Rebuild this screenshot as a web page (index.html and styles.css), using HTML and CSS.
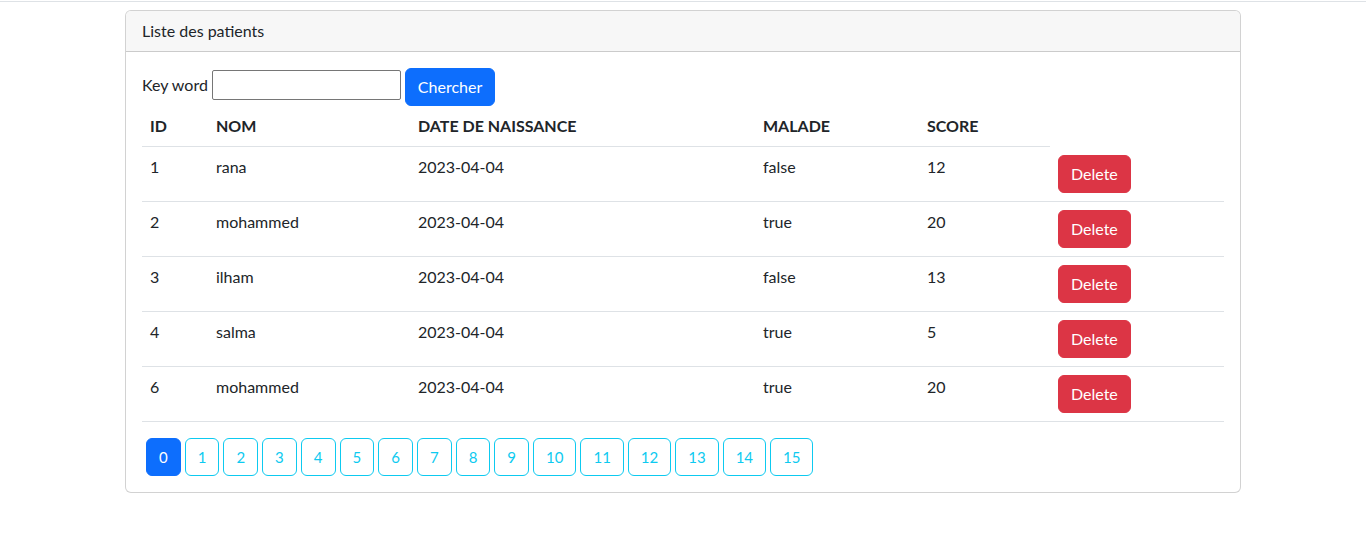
FILE: index.html
```html
<!DOCTYPE html>
<html lang="fr">
<head>
<meta charset="utf-8">
<title>Patients</title>
<link rel="stylesheet" href="styles.css">
</head>
<body>
<div class="topbar"></div>
<div class="container">
  <div class="card">
    <div class="card-header">Liste des patients</div>
    <div class="card-body">
      <form class="search">
        <label for="kw" class="kw-label">Key word</label>
        <input id="kw" class="kw" type="text">
        <button type="button" class="btn btn-primary">Chercher</button>
      </form>
      <table class="table">
        <colgroup>
          <col class="c-id"><col class="c-nom"><col class="c-date"><col class="c-malade"><col class="c-score"><col class="c-act">
        </colgroup>
        <thead>
          <tr><th>ID</th><th>NOM</th><th>DATE DE NAISSANCE</th><th>MALADE</th><th>SCORE</th></tr>
        </thead>
        <tbody>
          <tr><td>1</td><td>rana</td><td>2023-04-04</td><td>false</td><td>12</td><td><button type="button" class="btn btn-danger">Delete</button></td></tr>
          <tr><td>2</td><td>mohammed</td><td>2023-04-04</td><td>true</td><td>20</td><td><button type="button" class="btn btn-danger">Delete</button></td></tr>
          <tr><td>3</td><td>ilham</td><td>2023-04-04</td><td>false</td><td>13</td><td><button type="button" class="btn btn-danger">Delete</button></td></tr>
          <tr><td>4</td><td>salma</td><td>2023-04-04</td><td>true</td><td>5</td><td><button type="button" class="btn btn-danger">Delete</button></td></tr>
          <tr><td>6</td><td>mohammed</td><td>2023-04-04</td><td>true</td><td>20</td><td><button type="button" class="btn btn-danger">Delete</button></td></tr>
        </tbody>
      </table>
      <ul class="pages">
        <li><a class="btn btn-page btn-primary">0</a></li>
        <li><a class="btn btn-page btn-outline-info">1</a></li>
        <li><a class="btn btn-page btn-outline-info">2</a></li>
        <li><a class="btn btn-page btn-outline-info">3</a></li>
        <li><a class="btn btn-page btn-outline-info">4</a></li>
        <li><a class="btn btn-page btn-outline-info">5</a></li>
        <li><a class="btn btn-page btn-outline-info">6</a></li>
        <li><a class="btn btn-page btn-outline-info">7</a></li>
        <li><a class="btn btn-page btn-outline-info">8</a></li>
        <li><a class="btn btn-page btn-outline-info">9</a></li>
        <li><a class="btn btn-page btn-outline-info">10</a></li>
        <li><a class="btn btn-page btn-outline-info">11</a></li>
        <li><a class="btn btn-page btn-outline-info">12</a></li>
        <li><a class="btn btn-page btn-outline-info">13</a></li>
        <li><a class="btn btn-page btn-outline-info">14</a></li>
        <li><a class="btn btn-page btn-outline-info">15</a></li>
      </ul>
    </div>
  </div>
</div>
</body>
</html>
```
FILE: styles.css
```css
* { box-sizing: border-box; }
html, body { margin: 0; padding: 0; }
body {
  font-family: Lato, "Open Sans", "Noto Sans", sans-serif;
  font-size: 16px;
  line-height: 1.5;
  color: #212529;
  background: #fff;
}
.topbar {
  height: 2px;
  border-bottom: 1px solid #dee2e6;
}
.container {
  width: 1140px;
  margin: 8px auto 0;
  padding: 0 12px;
}
.card {
  border: 1px solid rgba(0,0,0,.175);
  border-radius: 6px;
  background: #fff;
}
.card-header {
  padding: 8px 16px;
  background: #f7f7f7;
  border-bottom: 1px solid rgba(0,0,0,.175);
  border-radius: 5px 5px 0 0;
}
.card-body { padding: 16px; }
.search {
  display: flex;
  align-items: flex-start;
  gap: 4px;
  margin: 0;
}
.kw-label { padding-top: 5px; }
.kw {
  width: 189px;
  height: 30px;
  font: inherit;
  padding: 1px 2px;
  border: 1px solid #767676;
  border-radius: 2px;
  margin: 2px 0 0;
}
.btn {
  display: inline-block;
  font: inherit;
  font-size: 16px;
  line-height: 24px;
  padding: 6px 12px;
  border: 1px solid transparent;
  border-radius: 6px;
  text-align: center;
  cursor: pointer;
  text-decoration: none;
}
.btn-page { font-size: 15px; }
.btn-primary { background: #0d6efd; border-color: #0d6efd; color: #fff; }
.btn-danger { background: #dc3545; border-color: #dc3545; color: #fff; }
.btn-outline-info { background: transparent; border-color: #0dcaf0; color: #0dcaf0; }
.table {
  width: 100%;
  table-layout: fixed;
  border-collapse: collapse;
  margin-bottom: 16px;
}
.c-id { width: 66px; }
.c-nom { width: 202px; }
.c-date { width: 345px; }
.c-malade { width: 164px; }
.c-score { width: 131px; }
.c-act { width: 174px; }
.table th, .table td {
  padding: 8px;
  text-align: left;
  vertical-align: top;
  border-bottom: 1px solid #dee2e6;
}
.table th { font-weight: 700; }
.pages {
  list-style: none;
  display: flex;
  margin: 0;
  padding: 0;
}
.pages li { margin-left: 4px; }
```
